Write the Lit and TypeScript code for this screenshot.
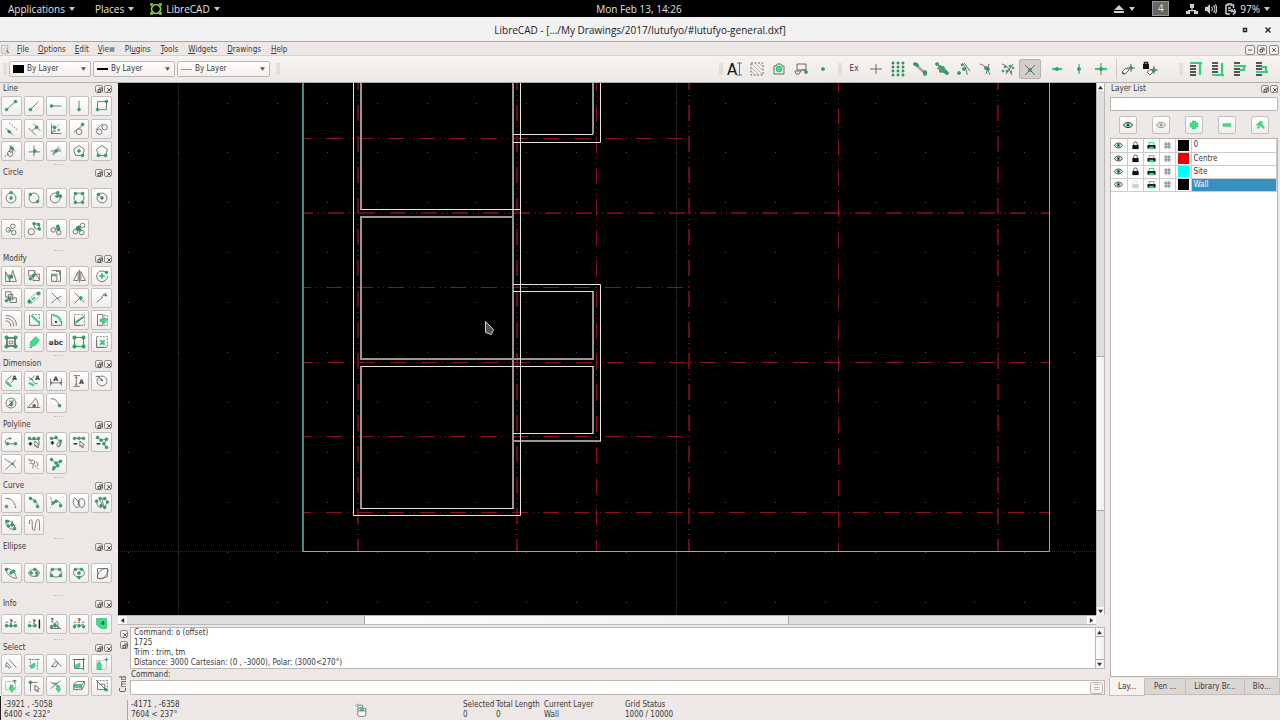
import { LitElement, html, svg, css } from "lit";
import { customElement, property } from "lit/decorators.js";

type Tool = [label: string, glyph: string];

/*
 * Glyph notation, on a 20 x 20 grid, parts separated by ";":
 *   g thin grey path     b heavy black path    n green path
 *   N heavy green path   f green filled path   k black filled path
 *   o grey circles x,y,r d green dots x,y      s dashed grey path
 *   h pale hatch path    w white filled path
 *   t bold text x,y,size,value                 T plain text
 */
@customElement("cad-glyph")
export class CadGlyph extends LitElement {
  @property() spec = "";

  static styles = css`
    :host { display: block; width: 20px; height: 20px; }
    svg { display: block; width: 100%; height: 100%; fill: none; }
    .g, .s, .o { stroke: #5f5f5f; stroke-width: 0.9; }
    .s { stroke-dasharray: 2 1.5; }
    .h { stroke: #9a9a9a; stroke-width: 0.6; }
    .b { stroke: #222; stroke-width: 1.6; }
    .n { stroke: #2fa866; stroke-width: 1.1; }
    .N { stroke: #35cf7b; stroke-width: 2.2; }
    .f { fill: #35e585; stroke: #249a5a; stroke-width: 0.6; }
    .k { fill: #111; }
    .w { fill: #f8f8f8; stroke: #444; stroke-width: 0.8; }
    .d { fill: #2fa866; stroke: #1d7d4b; stroke-width: 0.5; }
    .t, .T { fill: #333; font-family: "DejaVu Sans", sans-serif; font-weight: bold; }
    .T { font-weight: normal; fill: #111; }
  `;

  render() {
    return html`<svg viewBox="0 0 20 20" aria-hidden="true">
      ${this.spec.split(";").filter(Boolean).map((part) => {
        const kind = part[0];
        const body = part.slice(1).trim();
        if (kind === "d" || kind === "o") {
          return body.split(" ").map((c) => {
            const [x, y, r] = c.split(",");
            return svg`<circle class=${kind} cx=${x} cy=${y} r=${r ?? 1.6}></circle>`;
          });
        }
        if (kind === "t" || kind === "T") {
          const [x, y, size, value] = body.split(",");
          return svg`<text class=${kind} x=${x} y=${y} font-size=${size}>${value}</text>`;
        }
        return svg`<path class=${kind} d=${body}></path>`;
      })}
    </svg>`;
  }
}

const CURSOR = "w M11 9l5 4-2 .5 1 2.500-1.500.5-1-2.500-1.500 1z";

const GROUPS: { title: string; tools: Tool[] }[] = [
  {
    title: "Line",
    tools: [
      ["2 Points", "g M5 14L15 5;d5,14 15,5"],
      ["Angle", "g M6 14L15 5;d6,14"],
      ["Horizontal", "g M5 10H16;d5,10"],
      ["Vertical", "g M10 14V4;d10,14"],
      ["Rectangle", "g M5 5H15V14H5z;d15,5 5,14"],
      ["Parallel through point", "s M4 9l9 8M8 3l9 8;d8,13;g M5 10l6 6"],
      ["Parallel", "g M4 9l8 8M9 4l8 8M8 12l5-4;d13,8"],
      ["Bisector", "g M5 4V15H16M5 15l3-4;s M5 15L14 4M9 8v7;d8,8 13,11,1"],
      ["Tangent from point", "o10,13,3.200;g M4 14L15 5;d14,5"],
      ["Tangent to circles", "o7,13,3 13,8,3;g M3 11L11 4"],
      ["Tangent orthogonal", "o9,13,3;g M8 4l7 6M10 4l-2 7M12 6v5;d11,7;s M3 16l8-5"],
      ["Orthogonal", "g M4 11H17M10 4V16;n M10 10h2;d11,10"],
      ["Relative angle", "g M4 10H16M7 15L13 5M6 13L15 7;d10,10"],
      ["Polygon centre, corner", "g M10 4l6 4-2 7H6L4 8z;d10,10 14,15"],
      ["Polygon 2 corners", "g M10 4l6 4-2 7H6L4 8z;d6,15 14,15"],
    ],
  },
  {
    title: "Circle",
    tools: [
      ["Centre, point", "o10,10,5.500;d10,10 10,4"],
      ["2 Points", "o10,10,5.500;d6,6 14,14"],
      ["2 Points, radius", "o9,10,5.500;g M10 9l5-3;d11,8 15,8 12,4"],
      ["3 Points", "o10,10,5.500;d6,5 14,5 6,15 14,15"],
      ["Centre, radius", "o10,10,5.500;g M6 6l4 4;d10,10 6,6"],
      ["Tangent 2 circles, radius", "o7,11,2.500 13,14,2.500 12,7,2.500;n M7 11l4 1"],
      ["Tangent 2 circles, point", "o7,13,3.500 13,7,3;d10,4 15,5 16,10"],
      ["Tangent 2 points", "o7,11,2.500 13,14,2.500 12,9,2;d12,7 13,10"],
      ["Tangent 3", "o6,13,2.600 13,14,2.600 14,6,2.500 9,9,2;d10,8 8,10 11,11"],
    ],
  },
  {
    title: "Modify",
    tools: [
      ["Move / Copy", "g M4 5v11h5zM12 4l4 12H8z;f M6 9h6v3H8z;d10,11"],
      ["Rotate", "g M4 4h7v6H4zM9 8h7v7H9zM10 5l6 9;d6,13 9,10"],
      ["Scale", "g M5 4h10v12h-3M5 8h6v8H5z;n M10 5h4v4;f M6 9h4v1H6z"],
      ["Mirror", "g M9 5v10H4zM12 5v10h5zM10.500 3v14"],
      ["Move and Rotate", "g M15 7a6 6 0 1 0 1 3;N M10 7v6M7 10h6;d15,6"],
      ["Rotate two", "g M4 3h6v6H4zM9 10h7v5H9zM7 6h5v6H7z;d5,13 8,11"],
      ["Revert direction", "s M4 12L13 4M7 16L16 9;N M8 12l3-3;d5,14,2 15,5,2"],
      ["Trim", "g M5 4l10 10M5 16l5-5 6-3"],
      ["Trim two", "g M5 4l6 6-6 6M11 10l5 5;d12,10;n M12 8v5"],
      ["Lengthen", "g M4 15L11 9M9 9l6-5;s M11 6l6 2;d14,7,1"],
      ["Offset", "g M4 5c7 0 12 4 12 11M4 8c5 0 9 3 9 9M4 11c3 0 6 2 6 6"],
      ["Bevel", "g M5 4v12h11v-5;N M7 5l9 8;s M8 4h8v5"],
      ["Fillet", "g M5 4v12h11v-5M5 4h3;N M7 5c5 0 8 3 8 7;k M9 11h2v2H9z"],
      ["Divide", "s M5 4h11v12H5z;g M5 8v8h7M6 12l9-6;n M6 14l10-8M6 13l9-6"],
      ["Stretch", "g M5 4h6v12H5z;s M12 5h4v11h-4;f M8 9h4V7l4 3-4 4v-2H8z"],
      ["Properties", "g M5 5h10v10H5zM6 6h8v8H6zM8 9h4v3H8z;d5,5,2 15,5,2 5,15,2 15,15,2"],
      ["Attributes", "f M6 10l6-6 4 4-5 6-5 1z;n M5 16h3"],
      ["Explode text", "t 2,13,8,abc;h M2 10h16"],
      ["Edit block", "g M5 5h10v10H5z;n M5 5h10v10H5z;d5,5,2 15,5,2 5,15,2 15,15,2"],
      ["Delete selected", "s M4 4h12v12H4z;g M4 7v9h9;N M8 8l5 5M13 8l-5 5"],
    ],
  },
  {
    title: "Dimension",
    tools: [
      ["Aligned", "g M5 9l6-5M4 9l7 7;N M4 11l6 5;t 11,9,7,A;g M10 12l4-4"],
      ["Linear", "g M5 9l6-5M4 6l5 3;N M4 12l6 3;t 11,9,7,A;n M7 8l4 5h3"],
      ["Horizontal", "g M4 7v8M16 7v8M4 12h12M6 11l-2 1 2 1M14 11l2 1-2 1;t 7,10,7,A"],
      ["Vertical", "g M4 4h7M4 16h7M7 5v10M6 7l1-2 1 2M6 13l1 2 1-2;t 10,13,7,A"],
      ["Radial", "o10,10,5.500;g M5 4l6 6M9 7l2 3-3-1M3 5h4"],
      ["Diametric", "o10,10,5.500;g M6 14l8-8;n M8 8h4v4;t 8,13,5,d"],
      ["Angular", "g M3 15h14M3 15L12 5M11 4c3 3 4 7 3 11;t 8,14,6,a"],
      ["Leader", "g M4 5l5 1 5 6M12 12l3 2;d14,13"],
    ],
  },
  {
    title: "Polyline",
    tools: [
      ["Polyline", "g M9 6C3 6 2 12 6 12h9;d9,6,1 6,12 15,12"],
      ["Add node", "g M5 7h10l1 5;d5,6 10,6 15,6;b M6 10v4M4 12h4;" + CURSOR],
      ["Append node", "g M5 6h6l5 5-4 5;d5,6 10,5 15,9;b M6 9v4M4 11h4;o13,13,2"],
      ["Delete node", "g M5 6h10;d5,6 10,6 15,6;b M4 12h4;" + CURSOR],
      ["Delete between nodes", "g M5 5l4 3 6-1-3 6 4 3;d5,5 9,8 15,7 12,12 15,16;b M4 12h4"],
      ["Trim segments", "g M3 4c4 4 9 4 12 10M4 16L15 6;d12,10,1"],
      ["Equidistant", "g M4 6c5-1 8 0 6 4M5 9c5 0 5 3 3 6M12 8c3 0 3 3 1 5;s M4 4l11 12"],
      ["From segments", "n M5 5l5 4 5-3-3 6-6 3;d5,5 10,9 15,7 12,12 8,14 7,16,1"],
    ],
  },
  {
    title: "Curve",
    tools: [
      ["Arc: centre", "g M6 5c5 0 8 5 9 9M4 5h4;d5,14;g M14 15h2"],
      ["Arc: 3 points", "g M6 5c4 1 8 4 8 10;d6,5 11,8 14,14"],
      ["Arc tangential", "s M4 4c2 5 2 9 0 11;g M6 11c4-6 9-3 10 3;d7,10 10,8 15,13"],
      ["Spline", "g M5 4C2 8 4 15 8 15s3-6-3-11M13 5c-6 0-4 9 0 10 5 0 4-10 0-10M9 12l2-5"],
      ["Spline through points", "g M4 8c0 4 3 8 5 7s0-6-2-9M10 6c5-4 8 6 2 8z;d4,8 8,5 13,5 16,9 9,13 13,15"],
      ["Closed ellipse arc", "g M4 5c5-1 10 4 11 10-5 1-11-3-11-10zM11 5l2 6 2-1;d6,6 11,10 7,11 14,14"],
      ["Freehand", "g M5 9c-1-5 3-7 3-2s0 9 2 9 1-11 4-12 2 6 2 12"],
    ],
  },
  {
    title: "Ellipse",
    tools: [
      ["Axis", "g M4 5c5-1 12 5 12 11-5 0-12-5-12-11z;d5,6 10,10 13,8"],
      ["Foci, point", "g M4 10c0-5 12-5 12 0s-12 5-12 0z;d7,10 13,10 11,6 13,13,1"],
      ["4 Points", "g M4 10c0-6 12-6 12 0s-12 6-12 0z;d6,6 14,6 5,13 15,13"],
      ["Centre, 3 points", "g M4 10c0-6 12-6 12 0s-12 6-12 0z;d10,10 6,6 13,6 10,15"],
      ["Inscribed", "g M5 5h11v9l-5 2H5zM5 13c1-5 6-8 10-8s1 7-3 10-8 1-7-2z"],
    ],
  },
  {
    title: "Info",
    tools: [
      ["Distance point to point", "g M5 12h10M4 8h3M13 8h3;t 8,10,7,?;d5,12 10,12 15,12"],
      ["Distance entity to point", "g M4 12h9M4 8h2;b M16 5v10;t 8,10,7,?;d5,12 11,12"],
      ["Angle between lines", "g M6 8L15 15H4L12 6M12 8v7;t 4,8,6,?;d5,13 9,12"],
      ["Total length", "g M4 12c3-4 4 2 7 0s3-2 5 0M4 8h3M13 8h3;t 8,9,7,?;d5,13 10,12 15,13"],
      ["Area", "f M4 4h11v11h-6l-5-4z;t 9,11,6,4"],
    ],
  },
  {
    title: "Select",
    tools: [
      ["Deselect all", "g M8 5l8 9M5 8l5 5-2 2-2-3-2 1z"],
      ["Select all", "s M4 5h12M14 4v12M6 4v8;f M5 12l6-3v4l-4 2z"],
      ["Select entity", "g M8 4l8 9M10 7L5 13h5l2-4z"],
      ["Select window", "g M5 5h10v10H5zM3 5h14M15 3v14;f M5 12l6-3v4l-4 2z"],
      ["Deselect window", "h M4 6h11v10H4z;g M15 3v4M13 5h4;f M5 10l2-3 2 3v6H5z"],
      ["Invert selection", "h M4 5h11v9H4z;g M14 3v4M12 4h4;f M9 9h3v3h2l-3 5-3-5h1z"],
      ["Select contour", "g M4 6h10M6 4v12;d6,6;" + CURSOR],
      ["Select intersected", "g M4 13L15 4M4 6l9 4;n M6 7h6;f M11 10h3v3h1l-2 4-3-4h1z"],
      ["Select layer", "g M4 8l4-3h8l-3 4H4v5h9l3-5V5M4 9h9v5;f M5 9h7v3H5z"],
      ["Deselect intersected", "s M4 4h12v12;g M5 5v9h10M4 4l12 12M7 8h6v6;d14,14"],
    ],
  },
];

const DRAW_TOOLS: Tool[] = [
  ["Text", "T 2,16,15,A;g M12 4h5M14.500 4v12M12 16h5"],
  ["Hatch", "s M4 4h12v12H4z;h M4 4l12 12M8 4l8 8M12 4l4 4M4 8l8 8M4 12l4 4"],
  ["Image", "g M5 7h2l1-2h4l1 2h2v8H5z;f M7 10a3 3 0 1 0 6 0a3 3 0 1 0-6 0"],
  ["Block", "g M6 5h9v6H6zM4 12h6l-2 3H5zM10 11h5;d15,13"],
  ["Point", "d10,10"],
];

const SNAP_TOOLS: Tool[] = [
  ["Free snap", "g M10 5V15M4 10H16"],
  ["Grid", "d5,4,1.200 10,4,1.200 15,4,1.200 5,8,1.200 10,8,1.200 15,8,1.200 5,12,1.200 10,12,1.200 15,12,1.200 5,16,1.200 10,16,1.200 15,16,1.200"],
  ["Endpoints", "g M5 6l10 9M6 5l10 9;d5,5 7,6 15,13 15,15"],
  ["On entity", "g M5 5l11 10M5 9l9 6;d5,5 8,8 11,9 13,12 9,12 15,14"],
  ["Centre", "g M8 4c2 3 5 5 5 12M10 4l6 8;d5,14 10,10 8,6,1"],
  ["Middle", "g M4 5c5 1 8 6 10 11M10 15L13 5;d12,10 10,9"],
  ["Distance", "g M4 5c5 1 8 6 10 11M8 15L15 5;d7,8,1 12,7,1 15,9,1 9,12,1 13,13,1 5,12,1"],
  ["Intersection", "g M5 5l10 10M5 15L15 5;d10,10"],
];

const RESTRICT_TOOLS: Tool[] = [
  ["Restrict horizontal", "N M5 10H15;d10,10"],
  ["Restrict vertical", "n M10 5V15;d10,10"],
  ["Restrict orthogonal", "n M10 4V16;N M4 10H16;d10,10"],
];

const RELATIVE_TOOLS: Tool[] = [
  ["Set relative zero", "w M4 13l4-4 3 2-4 4zM4 13q0 3 3 2;g M9 9h8M13 5v8;d13,9"],
  ["Lock relative zero", "k M3 5h6v5H3z;b M4.500 5V3.500h3V5;w M7 13l4-3 2 3-3 3z;g M11 11h7M14 7v8;d14,11"],
];

const ORDER_TOOLS: Tool[] = [
  ["Move to top", "b M4 7h6M4 10h6M4 13h6M4 16h6;N M4 4h12M14 5v11"],
  ["Move to bottom", "b M4 4h6M4 7h6M4 10h6M4 13h6;N M4 16h12M14 4v11"],
  ["Raise", "b M4 4h6M4 10h6M4 13h6M4 16h6;N M4 7h12M14 7v4H10"],
  ["Lower", "b M4 4h6M4 7h6M4 10h6M4 16h6;N M4 13h12M9 8h5v5"],
];

const DOCK_BUTTONS = html`
  <button class="mini" aria-label="Float"><svg viewBox="0 0 8 8"><path d="M3 2h3v3M2 3.500h2.500v2.500H2z"></path></svg></button>
  <button class="mini" aria-label="Close"><svg viewBox="0 0 8 8"><path d="M2.200 2.200l3.600 3.600M5.800 2.200l-3.600 3.600"></path></svg></button>
`;

const shared = css`
  * { box-sizing: border-box; }
  button { font: inherit; color: inherit; padding: 0; margin: 0; }
  .mini {
    width: 8px; height: 8px; border: 1px solid #8d8989; border-radius: 2px;
    background: #f3efed; display: grid; place-items: center; flex: none;
  }
  .mini svg { width: 8px; height: 8px; fill: none; stroke: #444; stroke-width: 0.9; }
  .dock-head { display: flex; align-items: center; gap: 1px; height: 12px; }
  .dock-head h2 { flex: 1; margin: 0; font-size: 8px; font-weight: normal; }
`;

@customElement("cad-dock")
export class CadDock extends LitElement {
  static styles = [shared, css`
    :host { display: grid; min-height: 0; grid-template-rows: 84fr 86fr 105fr 61fr 61fr 61fr 57fr 44fr 54fr; }
    section { display: flex; flex-direction: column; min-height: 0; }
    .dock-head { padding: 0 6px 0 3px; flex: none; }
    .tools {
      flex: 1; display: grid; align-content: space-evenly; gap: 1px 2px;
      grid-template-columns: repeat(5, 1fr); grid-auto-rows: 20px; padding: 0 6px 0 1px;
    }
    .tool {
      height: 20px; display: grid; place-items: center;
      border: 1px solid #c3bfbd; border-radius: 2px;
      background: linear-gradient(#fff, #f0eeec);
    }
    .tool cad-glyph { width: 18px; height: 18px; }
    .grip { margin: 2px 0; height: 1px; width: 10px; align-self: center; flex: none; border-top: 1px dotted #c2bdbb; }
    section:last-child .grip { display: none; }
  `];

  render() {
    return GROUPS.map((g) => html`
      <section aria-label=${g.title}>
        <header class="dock-head"><h2>${g.title}</h2>${DOCK_BUTTONS}</header>
        <div class="tools">
          ${g.tools.map(([label, spec]) => html`
            <button class="tool" aria-label=${label}><cad-glyph .spec=${spec}></cad-glyph></button>`)}
        </div>
        <div class="grip"></div>
      </section>`);
  }
}

const steps = (from: number, to: number, step: number) =>
  Array.from({ length: Math.floor((to - from) / step) + 1 }, (_, i) => from + i * step);

@customElement("cad-canvas")
export class CadCanvas extends LitElement {
  static styles = css`
    :host { display: block; background: #000; min-width: 0; min-height: 0; overflow: hidden; }
    svg { display: block; width: 100%; height: 100%; fill: none; }
    .wall { stroke: #e4e4e4; stroke-width: 1; }
    .wall2 { stroke: #989494; stroke-width: 2; }
    .site { stroke: #5cc4b2; stroke-width: 1; }
    .site2 { stroke: #478c84; stroke-width: 2; }
    .axis { stroke: #1c1c1c; }
    .zero { stroke: #2b2b2b; stroke-dasharray: 1 1; }
    .centre { stroke: #8c1220; stroke-width: 1; stroke-dasharray: 16 5 1 4 1 4; }
    .centre2 { stroke: #6a0b18; stroke-width: 2; stroke-dasharray: 16 5 1 4 1 4; }
    .dot { fill: #4a4a4a; }
    .cursor { fill: #555; stroke: #ccc; stroke-width: 1; }
  `;

  render() {
    return html`<svg role="img" aria-label="Floor plan drawing">
      <g transform="translate(-118 -83)">
        <path class="axis" d="M178.500 83V615M676.500 83V615"></path>
        <path class="zero" d="M118 551.500H303M1050 551.500H1096"></path>
        ${steps(128.6, 1090, 49.8).map((x) => steps(103, 610, 49.9).map((y) =>
          svg`<rect class="dot" x=${Math.round(x - 0.8)} y=${Math.floor(y)} width="1" height="1"></rect>`))}
        <path class="centre" stroke-dashoffset="8" d="M303 138.500H689M303 287.500H689M303 436.500H689M596.500 83V551M303 512.500H1049"></path>
        <path class="centre2" stroke-dashoffset="6" d="M303 213H1049"></path>
        <path class="centre" stroke-dashoffset="6" d="M303 362.500H1049M838.500 83V551"></path>
        <path class="centre2" stroke-dashoffset="9" d="M358 83V551M517 83V551M689 83V551M998 83V551"></path>
        <path class="wall2" d="M361 83V210M361 217V359M361 366V509M360 217H513M360 359H594M513 83V509M593 83V134M593 291V359M593 366V434M513 441H601"></path>
        <path class="wall" d="M353.500 83V515.500H520.500V83M361 209.500H520.500M361 366.500H593.500M361 508.500H513M513 134.500H593M513 142.500H600.500V83M513 291.500H593M513 284.500H600.500V441M513 433.500H593"></path>
        <path class="site2" d="M303 83V552"></path>
        <path class="site" d="M303 551.500H1049.500V83"></path>
        <path class="cursor" d="M485.500 321.500L493.500 329.500L491.500 334.500L485.500 332.500z"></path>
      </g>
    </svg>`;
  }
}

const EYE = "w M1 10c4-7 14-7 18 0-4 7-14 7-18 0z;b M1 10c4-7 14-7 18 0-4 7-14 7-18 0z;f M6 10a4 4 0 1 0 8 0a4 4 0 1 0-8 0;k M8 10a2 2 0 1 0 4 0a2 2 0 1 0-4 0";
const LOCK = "k M3 9h14v9H3z;b M6 9V6a4 4 0 0 1 8 0V9";
const PRINT = "k M1 9h18v8H1z;N M5 9V3.500h10V9;f M5 13h10v5H5z";
const HASH = "g M6 2V18M8 2V18M12 2V18M14 2V18M2 6H18M2 8H18M2 12H18M2 14H18";

const LAYERS = [
  { name: "0", color: "#000000", locked: true },
  { name: "Centre", color: "#ee0000", locked: true },
  { name: "Site", color: "#00ffff", locked: true },
  { name: "Wall", color: "#000000", locked: false, selected: true },
];

@customElement("cad-layers")
export class CadLayers extends LitElement {
  static styles = [shared, css`
    :host { display: flex; flex-direction: column; min-height: 0; padding: 0 2px 0 0; }
    .dock-head { padding: 0 0 0 1px; flex: none; }
    .filter { margin-top: 2px; height: 14px; width: 100%; border: 1px solid #bab5b3; background: #fff; padding: 0 3px; font: inherit; }
    .actions { display: flex; justify-content: space-around; padding: 5px 2px 4px; }
    .actions button { width: 18px; height: 18px; border: 1px solid #c3bfbd; border-radius: 2px;
      background: linear-gradient(#fff, #f0eeec); display: grid; place-items: center; }
    .actions cad-glyph { width: 10px; height: 10px; }
    .off { opacity: 0.5; filter: grayscale(1); }
    .list { flex: 1; background: #fff; border: 1px solid #bab5b3; min-height: 0; }
    table { border-collapse: collapse; width: 100%; table-layout: fixed; }
    tr { height: 13px; }
    td { padding: 0; border-right: 1px solid #ccc; border-bottom: 1px solid #ccc; height: 13px; line-height: 10px; }
    td:not(:last-child) { width: 16px; }
    td:last-child { padding-left: 2px; }
    td cad-glyph { width: 9px; height: 9px; margin: 0 auto; }
    .faint { opacity: 0.2; }
    .swatch { width: 11px; height: 11px; margin: 0 auto; }
    .selected td:last-child { background: #378fc2; color: #fff; }
    nav { display: flex; height: 18px; flex: none; margin: 1px -2px 0 -1px; }
    .tab { border: 1px solid #c3bebc; background: #dcd7d5; height: 17px; flex: 41 1 0; border-left: 0; white-space: nowrap; }
    .tab.active { background: #f5f2f0; height: 18px; flex-grow: 35; border-left: 1px solid #c3bebc; border-top: 0; }
    .tab.wide { flex-grow: 59; }
    .tab.last { flex-grow: 35; }
  `];

  render() {
    return html`
      <header class="dock-head"><h2>Layer List</h2>${DOCK_BUTTONS}</header>
      <input class="filter" aria-label="Filter layers" />
      <div class="actions">
        <button aria-label="Show all layers"><cad-glyph .spec=${EYE}></cad-glyph></button>
        <button aria-label="Hide all layers"><cad-glyph class="off" .spec=${EYE}></cad-glyph></button>
        <button aria-label="Add layer"><cad-glyph .spec=${"f M6 2h8v4h4v8h-4v4H6v-4H2V6h4z"}></cad-glyph></button>
        <button aria-label="Remove layer"><cad-glyph .spec=${"f M2 7h16v6H2z"}></cad-glyph></button>
        <button aria-label="Modify layer"><cad-glyph .spec=${"f M2 10L11 2l4 2-1 4 5 8-3 1-5-6-4 6-3-1 4-6z"}></cad-glyph></button>
      </div>
      <div class="list">
        <table aria-label="Layers">
          <tbody>
            ${LAYERS.map((l) => html`
              <tr class=${l.selected ? "selected" : ""}>
                <td><cad-glyph .spec=${EYE}></cad-glyph></td>
                <td><cad-glyph class=${l.locked ? "" : "faint"} .spec=${LOCK}></cad-glyph></td>
                <td><cad-glyph .spec=${PRINT}></cad-glyph></td>
                <td><cad-glyph .spec=${HASH}></cad-glyph></td>
                <td><div class="swatch" style="background:${l.color}"></div></td>
                <td>${l.name}</td>
              </tr>`)}
          </tbody>
        </table>
      </div>
      <nav aria-label="Panels">
        <button class="tab active">Lay...</button>
        <button class="tab">Pen ...</button>
        <button class="tab wide">Library Br...</button>
        <button class="tab last">Blo...</button>
      </nav>`;
  }
}

/* Menu titles, split around the mnemonic letter. */
const MENUS: [string, string, string][] = [
  ["", "F", "ile"], ["", "O", "ptions"], ["", "E", "dit"], ["", "V", "iew"], ["Pl", "u", "gins"],
  ["", "T", "ools"], ["", "W", "idgets"], ["", "D", "rawings"], ["", "H", "elp"],
];

@customElement("app-root")
export class AppRoot extends LitElement {
  static styles = [shared, css`
    :host {
      display: flex; flex-direction: column; height: 100vh; overflow: hidden;
      background: #ede8e6; color: #3a3838;
      font: 8px/10px "DejaVu Sans Condensed", "DejaVu Sans", sans-serif;
    }
    .panel {
      display: grid; grid-template-columns: 1fr auto 1fr; align-items: center; height: 17px; flex: none;
      background: #000; color: #e2e2e2; padding: 0 10px 0 8px;
      font: 500 10px/14px "Open Sans", "Noto Sans", sans-serif;
    }
    .panel > div { display: flex; align-items: center; }
    .panel button { background: none; border: 0; display: flex; align-items: center; gap: 4px; }
    .left { gap: 20px; }
    .left button:last-child { margin-left: -4px; }
    .right { justify-content: flex-end; gap: 7px; }
    .workspace { background: #666; border: 1px solid #999; width: 17px; height: 15px; line-height: 13px; text-align: center; margin: 0 10px; }
    .caret { width: 6px; height: 4px; fill: #c8c8c8; flex: none; }
    .sys { width: 12px; height: 12px; fill: #cfcfcf; stroke: #cfcfcf; stroke-width: 0; display: block; }
    .title {
      display: grid; grid-template-columns: 1fr auto 1fr; align-items: center; height: 25px; flex: none;
      background: #f3f2f2; border-bottom: 1px solid #aaa6a5; color: #222; padding: 1px 8px 0;
    }
    .title h1 { margin: 0; grid-column: 2; font: 500 10px/14px "Open Sans", "Noto Sans", sans-serif; }
    .title > div { justify-self: end; display: flex; gap: 15px; }
    .title button { border: 0; background: none; width: 8px; height: 8px; }
    .title svg { display: block; width: 8px; height: 8px; fill: none; stroke: #222; stroke-width: 1.4; }
    .menu { display: flex; align-items: center; height: 14px; flex: none; border-bottom: 1px solid #d5d0ce; padding: 2px 1px 0; }
    .menu a { color: inherit; text-decoration: none; margin-left: 9px; }
    .menu a:first-of-type { margin-left: 7px; }
    .menu a:nth-of-type(n + 5) { margin-left: 10px; }
    .menu cad-glyph { width: 9px; height: 9px; }
    .menu .spacer { flex: 1; }
    .menu .mini { width: 10px; height: 10px; margin-left: 2px; }
    .bar { display: flex; align-items: center; height: 27px; flex: none; background: linear-gradient(#f7f4f2, #ece8e5); border-bottom: 1px solid #b3afad; padding: 0 7px 0 3px; }
    .pen {
      display: flex; align-items: center; gap: 3px; height: 16px; width: 82px; margin-left: 2px; padding: 0 4px 0 3px;
      border: 1px solid #bcb7b5; border-radius: 2px; background: linear-gradient(#fff, #f2f0ee);
    }
    .pen.wide { width: 93px; }
    .pen select { appearance: none; border: 0; background: none; font: inherit; color: inherit; flex: 1; min-width: 0; padding: 0; height: 12px; }
    .pen svg { width: 5px; height: 4px; fill: #555; }
    .chip { width: 11px; height: 8px; background: #000; }
    .chip.line { height: 2px; }
    .chip.hair { height: 1px; background: #999; }
    .handle { width: 4px; height: 12px; background: radial-gradient(circle, #dad5d3 0.6px, transparent 0.9px) 0 0 / 2px 2px; }
    .after { margin-left: 6px; }
    .strip { display: flex; align-items: center; }
    .strip button { width: 22px; height: 20px; border: 0; background: none; display: grid; place-items: center; border-radius: 2px; }
    .strip .on { background: #d2cecc; border: 1px solid #b7b3b1; }
    .draw { margin: 0 4px 0 1px; }
    .push { margin-left: auto; }
    .snap { margin-left: 1px; }
    .restrict { margin-left: 5px; padding-right: 4px; border-right: 1px solid #ccc7c5; }
    .order-handle { margin-left: 18px; }
    .order { margin-left: 2px; }
    main { flex: 1; min-height: 0; display: grid; grid-template-columns: 118px 1fr 170px; }
    .centre { display: grid; grid-template-rows: 1fr auto auto; min-height: 0; min-width: 0; padding-right: 5px; }
    .view { display: grid; grid-template-columns: 1fr 9px; min-height: 0; }
    .vscroll, .hscroll, .log-scroll { display: flex; background: #e0deda; }
    .vscroll, .log-scroll { flex-direction: column; border: 1px solid #bbb7b4; border-width: 0 1px; }
    .hscroll { height: 10px; border: 1px solid #bbb7b4; border-width: 1px 0; margin-right: 9px; }
    .vscroll button, .hscroll button, .log-scroll button { background: #fbfaf9; border: 0; flex: none; display: grid; place-items: center; width: 7px; height: 8px; }
    .hscroll button { width: 9px; }
    .vscroll svg, .hscroll svg, .log-scroll svg { width: 5px; height: 5px; fill: #333; }
    .thumb { background: linear-gradient(90deg, #fdfdfc, #f1efed); border: 1px solid #aaa6a3; border-width: 1px 0; }
    .hscroll .thumb { border-width: 0 1px; }
    .before-v { flex: 266; } .thumb-v { flex: 154; } .after-v { flex: 96; }
    .before-h { flex: 237; } .thumb-h { flex: 424; } .after-h { flex: 299; }
    .command { display: grid; grid-template-columns: 12px 1fr; padding: 2px 0 1px; min-height: 0; }
    .side { display: flex; flex-direction: column; align-items: center; gap: 3px; padding-top: 3px; }
    .side h2 { margin: auto 0 2px; font-size: 8px; font-weight: normal; writing-mode: vertical-rl; transform: rotate(180deg); }
    .console { display: flex; flex-direction: column; min-width: 0; }
    .log { display: flex; border: 1px solid #bcb7b5; background: #fff; }
    .log pre { margin: 0; flex: 1; font: inherit; padding-left: 3px; }
    .log-scroll { width: 9px; border-right: 0; background: #f2f0ee; }
    .log-scroll .thumb { flex: 1; }
    .console label { line-height: 11px; padding-left: 1px; }
    .entry { display: flex; height: 15px; border: 1px solid #bcb7b5; background: #fff; padding: 0 1px; align-items: center; }
    .entry input { flex: 1; border: 0; background: none; font: inherit; padding: 0 3px; height: 12px; outline: 0; }
    .entry button { width: 13px; height: 12px; border: 1px solid #bcb7b5; border-radius: 2px; background: #f5f3f1; line-height: 9px; color: #aaa; }
    .status {
      display: grid; height: 24px; flex: none; align-items: center; padding: 4px 0 0 1px; border-left: 1px solid #222;
      grid-template-columns: 127px 224px 108px 33px 48px 81px 1fr;
    }
    .status > div { white-space: pre; padding-left: 2px; }
    .status .coord { border-left: 1px solid #aaa6a5; padding-left: 3px; margin-left: -2px; }
    .status cad-glyph { width: 16px; height: 16px; }
  `];

  private caret() {
    return html`<svg class="caret" viewBox="0 0 6 4"><path d="M0 0h6L3 4z"></path></svg>`;
  }

  private arrow(points: string, label: string) {
    return html`<button aria-label=${label}><svg viewBox="0 0 6 6"><path d=${points}></path></svg></button>`;
  }

  private pen(label: string, chip: string, wide = false) {
    return html`<div class="pen ${wide ? "wide" : ""}">
      <span class="chip ${chip}"></span>
      <select aria-label=${label}><option>By Layer</option></select>
      <svg viewBox="0 0 6 4"><path d="M0 0h6L3 4z"></path></svg>
    </div>`;
  }

  private tools(list: Tool[]) {
    return list.map(([label, spec]) => html`
      <button class=${label === "Intersection" ? "on" : ""} aria-label=${label}><cad-glyph .spec=${spec}></cad-glyph></button>`);
  }

  render() {
    return html`
      <header class="panel">
        <div class="left">
          <button>Applications ${this.caret()}</button>
          <button>Places ${this.caret()}</button>
          <button>
            <svg class="sys" viewBox="0 0 12 12"><path fill="none" stroke="#8bd53c" stroke-width="1.600" d="M6 1.500a4.500 4.500 0 1 0 .1 0zM1 3V1h2M9 1h2v2M11 9v2H9M3 11H1V9"></path></svg>
            LibreCAD ${this.caret()}
          </button>
        </div>
        <time>Mon Feb 13, 14:26</time>
        <div class="right">
          <button aria-label="Eject"><svg class="sys" viewBox="0 0 12 12"><path d="M6 2l5 5H1zM1 8h10v2H1z"></path></svg>${this.caret()}</button>
          <span class="workspace">4</span>
          <svg class="sys" viewBox="0 0 12 12"><path d="M4 1h4v4H6.600v2H10v1h2v3H8V8.200H4V11H0V8h2V7h3.400V5H4z"></path></svg>
          <svg class="sys" viewBox="0 0 12 12"><path d="M0 4h2l3-3v10L2 8H0z"></path><path fill="none" stroke-width="1.200" d="M6.500 4c1 1 1 3 0 4M8.500 2.500c1.800 2 1.800 5 0 7M10.300 1.500c2 3 2 6 0 9"></path></svg>
          <button><svg class="sys" viewBox="0 0 12 12"><path fill="none" stroke-width="1.500" d="M4 2V1h3v1h2.500v3M2 11V2h3M2 11h4M4 5h3M4 7.500h3M8 6v2M10.500 6v2M7 8.500h4.500v1L9.500 11v1"></path></svg>97% ${this.caret()}</button>
        </div>
      </header>
      <header class="title">
        <h1>LibreCAD - [.../My Drawings/2017/lutufyo/#lutufyo-general.dxf]</h1>
        <div>
          <button aria-label="Restore"><svg viewBox="0 0 8 8"><path d="M2.500 2.500h3v3h-3z"></path></svg></button>
          <button aria-label="Close window"><svg viewBox="0 0 8 8"><path d="M1.500 1.500l5 5M6.500 1.500l-5 5"></path></svg></button>
        </div>
      </header>
      <nav class="menu" aria-label="Main menu">
        <cad-glyph .spec=${"w M2 1h13v17H2z;o10,10,4;b M12 12l6 6"}></cad-glyph>
        ${MENUS.map(([before, key, after]) => html`<a href="#">${before}<u>${key}</u>${after}</a>`)}
        <span class="spacer"></span>
        <button class="mini" aria-label="Minimise drawing"><svg viewBox="0 0 8 8"><path d="M2 4h4"></path></svg></button>
        ${DOCK_BUTTONS}
      </nav>
      <div class="bar">
        <span class="handle"></span>
        ${this.pen("Pen colour", "")}${this.pen("Pen width", "line")}${this.pen("Line type", "hair", true)}
        <span class="handle after"></span>
        <span class="handle push"></span>
        <div class="strip draw">${this.tools(DRAW_TOOLS)}</div>
        <span class="handle"></span>
        <div class="strip snap"><button>Ex</button>${this.tools(SNAP_TOOLS)}</div>
        <div class="strip restrict">${this.tools(RESTRICT_TOOLS)}</div>
        <div class="strip">${this.tools(RELATIVE_TOOLS)}</div>
        <span class="handle order-handle"></span>
        <div class="strip order">${this.tools(ORDER_TOOLS)}</div>
      </div>
      <main>
        <cad-dock></cad-dock>
        <div class="centre">
          <div class="view">
            <cad-canvas></cad-canvas>
            <div class="vscroll">
              ${this.arrow("M3 1l3 4H0z", "Scroll up")}
              <span class="before-v"></span><span class="thumb thumb-v"></span><span class="after-v"></span>
              ${this.arrow("M3 5l3-4H0z", "Scroll down")}
            </div>
          </div>
          <div class="hscroll">
            ${this.arrow("M1 3l4-3v6z", "Scroll left")}
            <span class="before-h"></span><span class="thumb thumb-h"></span><span class="after-h"></span>
            ${this.arrow("M5 3L1 0v6z", "Scroll right")}
          </div>
          <div class="command">
            <div class="side">
              <button class="mini" aria-label="Close"><svg viewBox="0 0 8 8"><path d="M2.200 2.200l3.600 3.600M5.800 2.200l-3.600 3.600"></path></svg></button>
              <button class="mini" aria-label="Float"><svg viewBox="0 0 8 8"><path d="M3 2h3v3M2 3.500h2.500v2.500H2z"></path></svg></button>
              <h2>Cmd</h2>
            </div>
            <div class="console">
              <div class="log">
                <pre>Command: o (offset)
1725
Trim : trim, tm
Distance: 3000 Cartesian: (0 , -3000), Polar: (3000&lt;270°)</pre>
                <div class="log-scroll">
                  ${this.arrow("M3 1l3 4H0z", "Log up")}<span class="thumb"></span>${this.arrow("M3 5l3-4H0z", "Log down")}
                </div>
              </div>
              <label for="cmd">Command:</label>
              <div class="entry"><input id="cmd" /><button aria-label="Command options">☰</button></div>
            </div>
          </div>
        </div>
        <cad-layers></cad-layers>
      </main>
      <footer class="status">
        <div>-3921 , -5058
6400 &lt; 232°</div>
        <div class="coord">-4171 , -6358
7604 &lt; 237°</div>
        <cad-glyph .spec=${"w M6 8h10v8q0 2-2 2H8q-2 0-2-2z;f M9 7h4v4H9z;g M6 11h10M12 7V4H6V2M3 4l4 3"}></cad-glyph>
        <div>Selected
0</div>
        <div>Total Length
0</div>
        <div>Current Layer
Wall</div>
        <div>Grid Status
1000 / 10000</div>
      </footer>`;
  }
}
